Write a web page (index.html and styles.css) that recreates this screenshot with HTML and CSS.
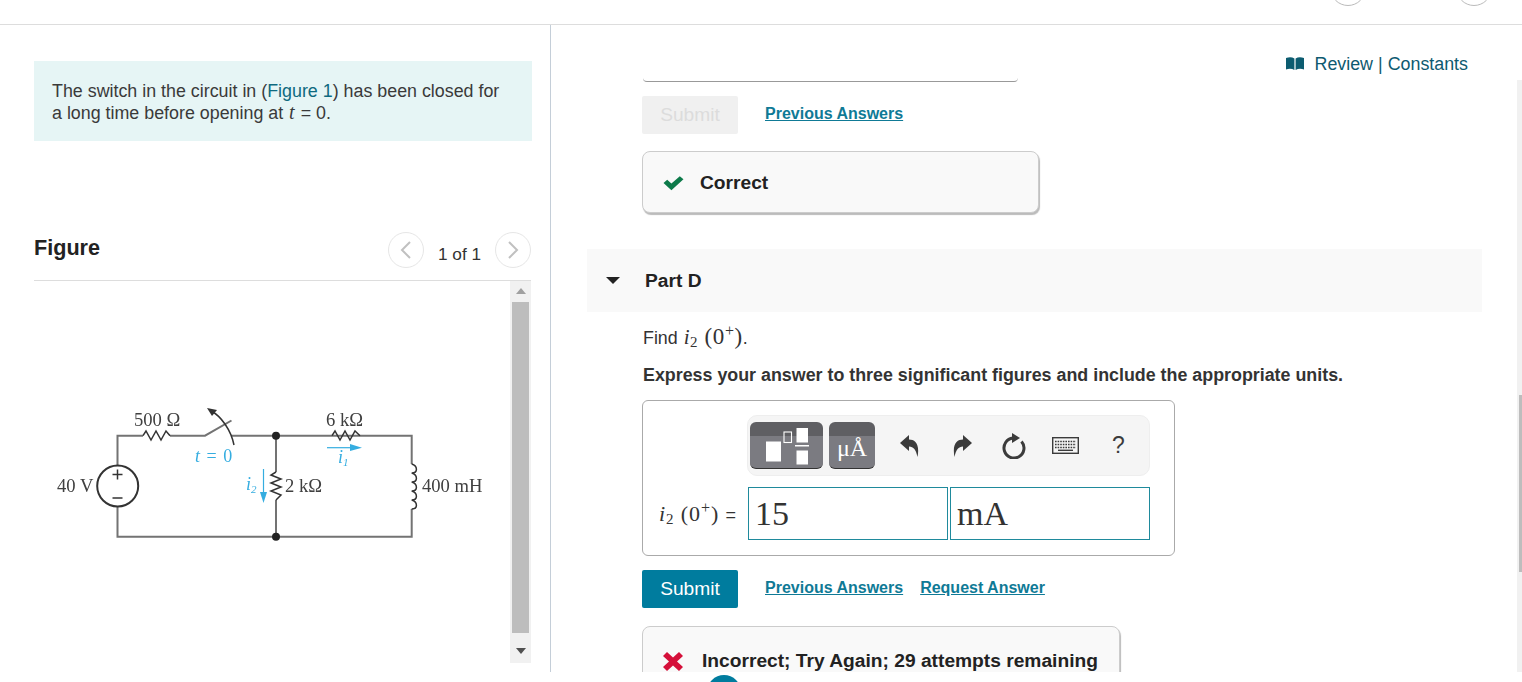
FILE: index.html
```html
<!DOCTYPE html>
<html lang="en">
<head>
    <meta charset="UTF-8">
    <title>Part D</title>
    <link rel="stylesheet" href="styles.css">
</head>
<body>
    <div class="top-bar">
        <span class="top-circle"></span>
        <span class="top-circle"></span>
    </div>

    <div class="main">
        <!-- left column: problem text and figure -->
        <div class="left-col">
            <div class="intro">The switch in the circuit in (<a href="#">Figure 1</a>) has been closed for a long time before opening at <i class="math intro-t">t</i> = 0.</div>

            <div class="figure-head">
                <h2>Figure</h2>
                <div class="pager">
                    <span class="pager-btn">
                        <svg width="12" height="20" viewBox="0 0 12 20"><path d="M10 2 L2 10 L10 18" fill="none" stroke="#c0c0c0" stroke-width="2"/></svg>
                    </span>
                    <span class="pager-text">1 of 1</span>
                    <span class="pager-btn">
                        <svg width="12" height="20" viewBox="0 0 12 20"><path d="M2 2 L10 10 L2 18" fill="none" stroke="#c0c0c0" stroke-width="2"/></svg>
                    </span>
                </div>
            </div>

            <div class="figure-body">
                <svg class="circuit" width="476" height="382" viewBox="34 281 476 382">
                    <g fill="none" stroke="#737373" stroke-width="2">
                        <path d="M117.5 465 V435.7 H143 M170 435.7 H205 L231.5 420.5 M231 435.7 H411.7 V464 M411.7 509 V536.7 H117.5 V507"/>
                        <path d="M276 435.7 V472 M276 500 V536.7"/>
                    </g>
                    <g fill="none" stroke="#333" stroke-width="1.5">
                        <circle cx="117.7" cy="486" r="20.5" stroke-width="2"/>
                        <path d="M143 435.7 L146 431 L151 440 L156 431 L161 440 L166 431 L170 435.7"/>
                        <path d="M332 435.7 L335 431 L340 440 L345 431 L350 440 L355 431 L360 435.7"/>
                        <path d="M276 472 L271 475 L281 479 L271 483 L281 487 L271 491 L281 495 L276 500"/>
                        <path d="M411.7 464 C418 466 418 473 411.7 473 C418 475 418 482 411.7 482 C418 484 418 491 411.7 491 C418 493 418 500 411.7 500 C418 502 418 509 411.7 509"/>
                        <path d="M234 445 C231 430 221 416 211 411"/>
                        <path d="M112.5 474.5 H122.5 M117.5 469.5 V479.5 M112.5 498 H122.5"/>
                    </g>
                    <path d="M207 408 L217 410 L212 416 Z" fill="#333"/>
                    <circle cx="276" cy="435.7" r="4" fill="#222"/>
                    <circle cx="276" cy="536.7" r="4" fill="#222"/>
                    <path d="M327 447.7 H352" stroke="#35ade0" stroke-width="1.2"/>
                    <path d="M350 444 L362 447.7 L350 451 Z" fill="#35ade0"/>
                    <path d="M263.5 469 V495" stroke="#35ade0" stroke-width="1.2"/>
                    <path d="M260 492 L263.5 503 L267 492 Z" fill="#35ade0"/>
                    <g class="circuit-text">
                        <text x="134" y="426">500 Ω</text>
                        <text x="326" y="426">6 kΩ</text>
                        <text x="57" y="492">40 V</text>
                        <text x="285" y="492">2 kΩ</text>
                        <text x="422" y="492">400 mH</text>
                    </g>
                    <g class="circuit-blue">
                        <text class="switch-time" x="195" y="462"><tspan font-style="italic">t</tspan> = 0</text>
                        <text x="338" y="463" font-style="italic">i<tspan font-size="11" dy="3">1</tspan></text>
                        <text x="246" y="490" font-style="italic">i<tspan font-size="11" dy="3">2</tspan></text>
                    </g>
                </svg>
                <div class="fig-scroll">
                    <span class="arrow-up"></span>
                    <span class="fig-thumb"></span>
                    <span class="arrow-down"></span>
                </div>
            </div>
        </div>

        <!-- right column: answers -->
        <div class="right-col">
            <div class="review-row">
                <svg width="18" height="13" viewBox="0 0 18 13"><path d="M0 1 C3 0 6 0 8.4 1.4 V13 C6 11.6 3 11.6 0 12.4 Z M18 1 C15 0 12 0 9.6 1.4 V13 C12 11.6 15 11.6 18 12.4 Z" fill="#0c5c70"/></svg>
                <a href="#">Review</a> | <a href="#">Constants</a>
            </div>

            <div class="prev-stub"></div>

            <div class="action-row">
                <button class="submit-btn disabled">Submit</button>
                <a class="action-link" href="#">Previous Answers</a>
            </div>

            <div class="feedback correct">
                <svg width="21" height="16" viewBox="0 0 20 14"><path d="M0.5 7 L4 4 L8 7.5 L16 0.5 L19.5 3.5 L8 14 Z" fill="#0d7a4a"/></svg>
                <span>Correct</span>
            </div>

            <div class="part-bar">
                <span class="caret"></span>
                <span class="part-title">Part D</span>
            </div>

            <p class="find">Find <span class="math"><i>i</i><sub>2</sub> (0<sup>+</sup>)</span>.</p>
            <p class="express">Express your answer to three significant figures and include the appropriate units.</p>

            <div class="answer-card">
                <div class="toolbar">
                    <span class="tpl-btn tpl-wide">
                        <svg width="50" height="40" viewBox="0 0 50 40" fill="#fff">
                            <rect x="4" y="16.5" width="15" height="20"/>
                            <rect x="22" y="7" width="7.5" height="10.5" fill="none" stroke="#fff" stroke-width="1.1"/>
                            <rect x="34.5" y="3" width="11.5" height="14.5"/>
                            <rect x="33" y="20" width="14" height="1.5"/>
                            <rect x="34.5" y="25.5" width="11.5" height="14"/>
                        </svg>
                    </span>
                    <span class="tpl-btn tpl-unit">μÅ</span>
                    <svg class="tool-undo" width="19" height="22" viewBox="0 0 19 22"><path d="M0 8 L9 0 V4.6 C15 4.6 20 9 17.5 22 C16 15 13.5 11.6 9 11.6 V16 Z" fill="#3b3b3b"/></svg>
                    <svg class="tool-redo" width="19" height="22" viewBox="0 0 19 22"><path d="M19 8 L10 0 V4.6 C4 4.6 -1 9 1.5 22 C3 15 5.5 11.6 10 11.6 V16 Z" fill="#3b3b3b"/></svg>
                    <svg class="tool-reset" width="24" height="26" viewBox="0 0 24 26"><path d="M19.5 8.4 A10 10 0 1 1 11 5.05" fill="none" stroke="#3b3b3b" stroke-width="3"/><path d="M10 0 L18 5 L10 10 Z" fill="#3b3b3b"/></svg>
                    <svg class="tool-keys" width="27" height="17" viewBox="0 0 27 17">
                        <rect x="0.7" y="0.7" width="25.6" height="15.6" fill="none" stroke="#3b3b3b" stroke-width="1.4"/>
                        <path d="M3 4.5 H24 M3 7.5 H24 M3 10.5 H24" stroke="#3b3b3b" stroke-width="1.6" stroke-dasharray="1.6 1"/>
                        <path d="M6 13.3 H21" stroke="#3b3b3b" stroke-width="1.4"/>
                    </svg>
                    <span class="tool-help">?</span>
                </div>
                <div class="answer-row">
                    <span class="answer-label math"><i>i</i><sub>2</sub> (0<sup>+</sup>) <span class="equals">=</span></span>
                    <span class="answer-box">15</span>
                    <span class="answer-box">mA</span>
                </div>
            </div>

            <div class="action-row submit-row">
                <button class="submit-btn">Submit</button>
                <a class="action-link" href="#">Previous Answers</a>
                <a class="action-link" href="#">Request Answer</a>
            </div>

            <div class="feedback incorrect">
                <svg width="20" height="19" viewBox="0 0 20 19"><path d="M0 4 L4 0 L10 5.5 L16 0 L20 4 L14 9.5 L20 15 L16 19 L10 13.5 L4 19 L0 15 L6 9.5 Z" fill="#d5103a"/></svg>
                <span>Incorrect; Try Again; 29 attempts remaining</span>
            </div>

            <div class="page-scroll"><span class="page-thumb"></span></div>
        </div>
    </div>

    <div class="help-bubble"></div>
</body>
</html>
```

FILE: styles.css
```css
html, body {
    margin: 0;
    height: 682px;
    overflow: hidden;
    background-color: white;
}
body {
    position: relative;
    font-family: "Liberation Sans", Arial, sans-serif;
    font-size: 17.85px;
    color: #333;
}
a {
    color: #0e6a80;
    text-decoration: none;
}
.top-bar {
    height: 24px;
    border-bottom: 1px solid #ddd;
    overflow: hidden;
    display: flex;
    justify-content: flex-end;
    gap: 90px;
    padding-right: 30px;
}
.top-circle {
    width: 34px;
    height: 34px;
    margin-top: -30px;
    border: 1px solid #bbb;
    border-radius: 50%;
}
.main {
    display: flex;
    height: 647px;
    overflow: hidden;
}

/* left column */
.left-col {
    width: 551px;
    flex: none;
    box-sizing: border-box;
    border-right: 1px solid #c4ced8;
    padding: 36px 0 0 34px;
}
.intro {
    width: 498px;
    height: 80px;
    box-sizing: border-box;
    padding: 19px 18px 0;
    line-height: 22px;
    background-color: #e6f5f5;
    color: #3a3a3a;
}
.intro a {
    color: #0e6a80;
}
.intro-t {
    font-size: 20px;
    line-height: 0;
    margin: 0 1px;
}
.math {
    font-family: "Liberation Serif", serif;
}
.figure-head {
    display: flex;
    justify-content: space-between;
    align-items: center;
    width: 497px;
    height: 48px;
    margin-top: 92px;
    border-bottom: 1px solid #ddd;
    box-sizing: border-box;
    padding-bottom: 13px;
}
.figure-head h2 {
    margin: -4px 0 0;
    font-size: 21.6px;
    color: #222;
}
.pager {
    display: flex;
    align-items: center;
    gap: 14px;
}
.pager-btn {
    width: 36px;
    height: 36px;
    box-sizing: border-box;
    border: 1px solid #e6e6e6;
    border-radius: 50%;
    display: flex;
    align-items: center;
    justify-content: center;
}
.pager-text {
    margin-top: 8px;
    font-size: 17.2px;
}
.figure-body {
    display: flex;
    align-items: flex-start;
    width: 497px;
}
.circuit {
    flex: none;
    filter: blur(0.3px);
}
.circuit-text text {
    font-family: "Liberation Serif", serif;
    font-size: 18.6px;
    fill: #404040;
}
.circuit-blue text {
    font-family: "Liberation Serif", serif;
    font-size: 18px;
    fill: #35ade0;
}
.switch-time {
    word-spacing: 2px;
}
.fig-scroll {
    width: 21px;
    height: 382px;
    box-sizing: border-box;
    padding: 0 2px;
    background-color: #f1f1f1;
    display: flex;
    flex-direction: column;
    align-items: center;
}
.arrow-up {
    margin: 7px 0 8px;
    border: 5px solid transparent;
    border-top: none;
    border-bottom: 6px solid #a0a0a0;
}
.fig-thumb {
    width: 17px;
    height: 331px;
    background-color: #bdbdbd;
}
.arrow-down {
    margin-top: 15px;
    border: 5px solid transparent;
    border-bottom: none;
    border-top: 6px solid #505050;
}

/* right column */
.right-col {
    position: relative;
    flex: 1;
    padding-left: 91px;
}
.review-row {
    height: 53px;
    box-sizing: border-box;
    padding: 28px 54px 0 0;
    display: flex;
    justify-content: flex-end;
    align-items: flex-start;
    gap: 5px;
    line-height: 22px;
    color: #0e5a70;
}
.review-row svg {
    margin: 4px 6px 0 0;
}
.review-row a {
    color: #0e5a70;
}
.prev-stub {
    width: 375px;
    height: 4px;
    margin-left: 1px;
    box-sizing: border-box;
    border-bottom: 1px solid #999;
    border-radius: 0 0 6px 6px;
}
.action-row {
    display: flex;
    align-items: center;
    margin-top: 14px;
    height: 38px;
}
.submit-btn {
    width: 96px;
    height: 38px;
    padding: 0;
    border: none;
    border-radius: 2px;
    font-family: inherit;
    font-size: 19.2px;
    color: white;
    background-color: #007c9e;
    margin-right: 27px;
}
.submit-btn.disabled {
    background-color: #f0f0f0;
    color: #dcdcdc;
}
.action-link {
    font-size: 16px;
    font-weight: bold;
    color: #0f7a96;
    text-decoration: underline;
    margin: -2px 17px 0 0;
}
.feedback {
    box-sizing: border-box;
    display: flex;
    align-items: center;
    background-color: #f9f9f9;
    border: 1px solid #ccc;
    border-radius: 8px;
    box-shadow: 1px 2px 1px #bbb;
    font-size: 19.2px;
    font-weight: bold;
    color: #222;
}
.feedback svg {
    flex: none;
}
.correct {
    width: 397px;
    height: 62px;
    margin-top: 17px;
    padding: 2px 0 0 20px;
    gap: 16px;
}
.incorrect {
    width: 478px;
    height: 70px;
    margin-top: 18px;
    padding: 0 0 0 20px;
    gap: 19px;
}
.part-bar {
    display: flex;
    align-items: center;
    height: 63px;
    width: 895px;
    margin: 36px 0 0 -55px;
    background-color: #f9f9f9;
}
.caret {
    margin-left: 19px;
    border: 7.5px solid transparent;
    border-bottom: none;
    border-top: 7px solid #222;
}
.part-title {
    margin-left: 25px;
    font-size: 19.2px;
    font-weight: bold;
    color: #222;
}
.find {
    margin: 12px 0 0 1px;
    height: 26px;
    line-height: 26px;
}
.find .math {
    font-size: 23px;
    margin-left: 1px;
    letter-spacing: 0.6px;
}
.find i {
    font-size: 21px;
}
.find sub, .answer-label sub {
    font-size: 15px;
    line-height: 0;
    vertical-align: -3px;
}
.find sup, .answer-label sup {
    font-size: 16px;
    line-height: 0;
    vertical-align: 8px;
}
.express {
    margin: 13px 0 0 1px;
    height: 24px;
    line-height: 24px;
    font-weight: bold;
}
.answer-card {
    box-sizing: border-box;
    width: 533px;
    height: 156px;
    margin-top: 13px;
    padding: 14px 0 0 16px;
    border: 1px solid #aaa;
    border-radius: 6px;
}
.toolbar {
    display: flex;
    align-items: center;
    box-sizing: border-box;
    width: 403px;
    height: 61px;
    margin-left: 88px;
    padding-left: 2px;
    background-color: #f5f5f5;
    border: 1px solid #eee;
    border-radius: 10px;
}
.tpl-btn {
    box-sizing: border-box;
    height: 47px;
    border-radius: 6px;
    border-bottom: 1px solid #333;
    background: linear-gradient(#5f5f63 0 14px, #7b7b81 14px);
    display: flex;
    align-items: center;
    justify-content: center;
    color: #fff;
}
.tpl-wide {
    width: 73px;
}
.tpl-unit {
    width: 46px;
    margin-left: 6px;
    font-family: "Liberation Serif", serif;
    font-size: 24px;
    padding-top: 6px;
}
.tool-undo {
    margin-left: 25px;
}
.tool-redo {
    margin-left: 34px;
}
.tool-reset {
    margin-left: 30px;
}
.tool-keys {
    margin-left: 26px;
}
.tool-help {
    margin-left: 33px;
    font-size: 23px;
    color: #3b3b3b;
}
.answer-row {
    display: flex;
    align-items: center;
    margin-top: 11px;
    gap: 2px;
}
.answer-label {
    width: 87px;
    font-size: 22px;
    letter-spacing: 0.9px;
    white-space: nowrap;
}
.equals {
    font-family: "Liberation Sans", sans-serif;
    font-size: 18px;
}
.answer-box {
    box-sizing: border-box;
    width: 200px;
    height: 53px;
    padding-left: 6px;
    border: 1px solid #1f8a9c;
    font-family: "Liberation Serif", serif;
    font-size: 34px;
    line-height: 51px;
    color: #333;
}
.page-scroll {
    position: absolute;
    top: 55px;
    right: 0;
    bottom: 0;
    width: 5px;
    background-color: #f1f1f1;
}
.page-thumb {
    display: block;
    width: 3px;
    height: 177px;
    margin: 315px 0 0 2px;
    background-color: #bdbdbd;
}
.help-bubble {
    position: absolute;
    left: 707px;
    top: 675px;
    width: 34px;
    height: 34px;
    border-radius: 50%;
    background-color: #007c9e;
}
```
